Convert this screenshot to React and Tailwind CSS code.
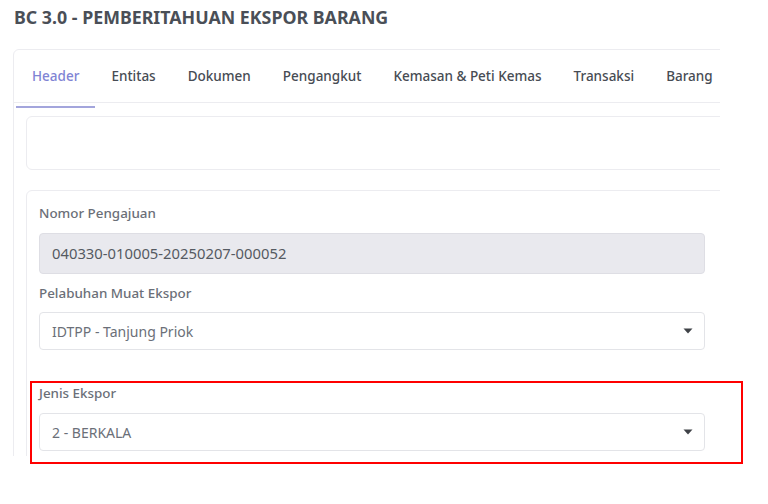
import React from 'react'

const tabs = ["Header", "Entitas", "Dokumen", "Pengangkut", "Kemasan & Peti Kemas", "Transaksi", "Barang"]

function Caret() {
    return (
        <svg width="10" height="6" viewBox="0 0 10 6" className="shrink-0">
            <path d="M0.5 0.5 L9.5 0.5 L5 5.5 Z" fill="#3f4247" />
        </svg>
    )
}

function Label({ children, className = "" }) {
    return <p className={`text-[13.4px] leading-[20px] font-medium text-[#6b6f78] ${className}`}>{children}</p>
}

function SelectBox({ value, className = "" }) {
    return (
        <div className={`h-[38px] w-[666px] flex items-center justify-between pl-[12px] pr-[11px] border border-[#e3e4e8] rounded-[4px] bg-white ${className}`}>
            <span className="text-[14px] text-[#6b6f78]">{value}</span>
            <Caret />
        </div>
    )
}

export default function App() {
    return (
        <div className="relative w-[768px] h-[504px] bg-white font-['Noto_Sans',sans-serif]">
            <h1 className="pl-[14px] pt-[5px] text-[17.8px] leading-[24px] font-bold text-[#4a4f57]">
                BC 3.0 - PEMBERITAHUAN EKSPOR BARANG
            </h1>

            <div className="mt-[20px] w-[720px] h-[407px] overflow-hidden">
                <div className="ml-[13px] w-[820px] border border-[#ececf0] rounded-[6px] bg-white">
                    {/* tabs */}
                    <div className="flex h-[53px] border-b border-[#ececf0] pl-[2px]">
                        {tabs.map((t, i) => (
                            <div
                                key={t}
                                className={`px-[16px] flex items-center whitespace-nowrap text-[13.5px] font-medium ${i === 0 ? "text-[#8084d4]" : "text-[#474c54]"}`}
                            >
                                {t}
                            </div>
                        ))}
                    </div>
                    <div className="pl-[2px] pt-[3px]">
                        <div className="w-[79px] h-[2px] bg-[#a3a5dc]" />
                    </div>

                    <div className="px-[12px] pt-[8px]">
                        <div className="h-[54px] border border-[#ececf0] rounded-[6px]" />

                        <div className="mt-[20px] border border-[#ececf0] rounded-[6px] px-[12px] pt-[12px] pb-[20px]">
                            <Label>Nomor Pengajuan</Label>
                            <div className="mt-[10px] h-[41px] w-[666px] flex items-center pl-[12px] bg-[#e9e9ee] border border-[#dedee4] rounded-[4px]">
                                <span className="text-[14.8px] text-[#555a62]">040330-010005-20250207-000052</span>
                            </div>

                            <Label className="mt-[9px]">Pelabuhan Muat Ekspor</Label>
                            <SelectBox value="IDTPP - Tanjung Priok" className="mt-[9px]" />

                            <Label className="mt-[33px]">Jenis Ekspor</Label>
                            <SelectBox value="2 - BERKALA" className="mt-[10px]" />
                        </div>
                    </div>
                </div>
            </div>

            {/* highlight annotation */}
            <div className="absolute left-[30px] top-[381px] w-[713px] h-[83px] border-2 border-[#ff0000] pointer-events-none" />
        </div>
    )
}
